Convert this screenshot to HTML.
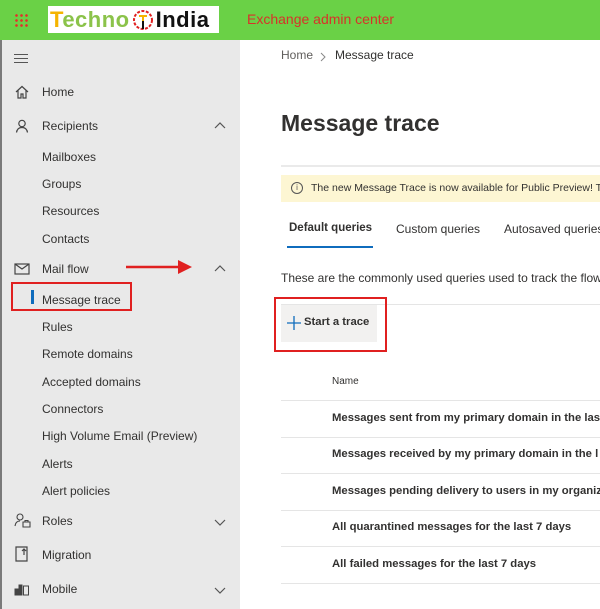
<!DOCTYPE html>
<html><head><style>
*{margin:0;padding:0;box-sizing:border-box}
body{width:600px;height:609px;overflow:hidden;font-family:"Segoe UI","Liberation Sans",sans-serif;background:#fff;position:relative;color:#323130;font-size:12px}
.hdr{position:absolute;left:0;top:0;width:600px;height:40px;background:#6ad146}
.logo{position:absolute;left:48px;top:6px;width:171px;height:27px;background:#fff;font-weight:bold;font-size:22px;line-height:27px;padding-left:2px;letter-spacing:0.5px}
.side{position:absolute;left:0;top:40px;width:240px;height:569px;background:#e9e9e9;border-left:2px solid #7a7a7a}
.t{position:absolute;font-size:12px;color:#323130;white-space:nowrap}
.ic{position:absolute}
.row{position:absolute;left:281px;width:319px;height:1px;background:#e5e5e5}
.b{font-weight:bold;color:#323130;font-size:11.3px}
</style></head><body>
<div class="hdr">
 <div style="position:absolute;left:14px;top:13px;width:14px;height:14px;background-image:radial-gradient(circle,#e0342a 1.2px,transparent 1.5px);background-size:5px 5px"></div>
 <div class="logo"><span style="color:#f5b400">T</span><span style="color:#8bc34a">echno</span><svg width="24" height="22" viewBox="0 0 24 22" style="vertical-align:-4px;margin:0 1px"><circle cx="12" cy="11" r="9" fill="none" stroke="#e02020" stroke-width="2" stroke-dasharray="3 1.5"/><path d="M8 7H16M12 7V20" stroke="#f5b400" stroke-width="2"/><path d="M12 12V20" stroke="#111" stroke-width="2"/></svg><span style="color:#111">India</span></div>
 <div class="t" style="left:247px;top:11px;font-size:14px;color:#d8322a">Exchange admin center</div>
</div>
<div class="side">
 <div class="ic" style="left:12px;top:14px;width:14px;height:9px;border-top:1.3px solid #555;border-bottom:1.3px solid #555"><div style="margin-top:3px;height:1.3px;background:#555"></div></div>
 <svg class="ic" style="left:13px;top:45px" width="14" height="14" viewBox="0 0 14 14" fill="none" stroke="#444" stroke-width="1.2"><path d="M1 7L7 1.5 13 7M3 5.5V13H6V9H8V13H11V5.5"/></svg>
 <div class="t" style="left:40px;top:45px">Home</div>
 <svg class="ic" style="left:13px;top:79px" width="14" height="14" viewBox="0 0 14 14" fill="none" stroke="#444" stroke-width="1.2"><circle cx="7" cy="4.5" r="3.2"/><path d="M1.5 13.5C2 10 4 8.5 7 8.5S12 10 12.5 13.5"/></svg>
 <div class="t" style="left:40px;top:79px">Recipients</div>
 <svg class="ic" style="left:212px;top:82px" width="12" height="7" viewBox="0 0 12 7" fill="none" stroke="#555" stroke-width="1.2"><path d="M1 6L6 1 11 6"/></svg>
 <div class="t" style="left:40px;top:110px">Mailboxes</div>
 <div class="t" style="left:40px;top:137px">Groups</div>
 <div class="t" style="left:40px;top:164px">Resources</div>
 <div class="t" style="left:40px;top:192px">Contacts</div>
 <svg class="ic" style="left:12px;top:223px" width="16" height="12" viewBox="0 0 16 12" fill="none" stroke="#444" stroke-width="1.2"><rect x="1" y="1" width="14" height="10"/><path d="M1 1L8 6 15 1"/></svg>
 <div class="t" style="left:40px;top:222px">Mail flow</div>
 <svg class="ic" style="left:212px;top:225px" width="12" height="7" viewBox="0 0 12 7" fill="none" stroke="#555" stroke-width="1.2"><path d="M1 6L6 1 11 6"/></svg>
 <div class="ic" style="left:9px;top:242px;width:121px;height:29px;border:2.5px solid #e02020"></div>
 <div class="ic" style="left:29px;top:250px;width:3px;height:14px;background:#0f6cbd"></div>
 <div class="t" style="left:40px;top:253px">Message trace</div>
 <div class="t" style="left:40px;top:280px">Rules</div>
 <div class="t" style="left:40px;top:307px">Remote domains</div>
 <div class="t" style="left:40px;top:335px">Accepted domains</div>
 <div class="t" style="left:40px;top:362px">Connectors</div>
 <div class="t" style="left:40px;top:389px">High Volume Email (Preview)</div>
 <div class="t" style="left:40px;top:417px">Alerts</div>
 <div class="t" style="left:40px;top:444px">Alert policies</div>
 <svg class="ic" style="left:12px;top:473px" width="17" height="15" viewBox="0 0 17 15" fill="none" stroke="#444" stroke-width="1.1"><circle cx="6" cy="4" r="3"/><path d="M1 13C1.5 9.5 3.5 8 6 8M9 9h7v5H9zM11 9V7.5h3V9"/></svg>
 <div class="t" style="left:40px;top:474px">Roles</div>
 <svg class="ic" style="left:212px;top:479px" width="12" height="7" viewBox="0 0 12 7" fill="none" stroke="#555" stroke-width="1.2"><path d="M1 1L6 6 11 1"/></svg>
 <svg class="ic" style="left:13px;top:506px" width="14" height="16" viewBox="0 0 14 16" fill="none" stroke="#444" stroke-width="1.2"><path d="M1 1H12V15H1zM9 3V9M7 5L9 3 11 5"/></svg>
 <div class="t" style="left:40px;top:508px">Migration</div>
 <svg class="ic" style="left:12px;top:541px" width="16" height="15" viewBox="0 0 16 15" fill="#444" stroke="#444" stroke-width="1"><rect x="1" y="8" width="3" height="6"/><rect x="5" y="4" width="3" height="10"/><rect x="9.5" y="5" width="5" height="9" fill="none"/></svg>
 <div class="t" style="left:40px;top:542px">Mobile</div>
 <svg class="ic" style="left:212px;top:547px" width="12" height="7" viewBox="0 0 12 7" fill="none" stroke="#555" stroke-width="1.2"><path d="M1 1L6 6 11 1"/></svg>
</div>
<svg style="position:absolute;left:126px;top:260px" width="66" height="14"><path d="M0 7H54" stroke="#e02020" stroke-width="2.5"/><path d="M52 0L66 7 52 14z" fill="#e02020"/></svg>
<div class="t" style="left:281px;top:48px;color:#605e5c">Home</div>
<svg class="ic" style="left:320px;top:52px" width="6" height="10" viewBox="0 0 6 10" fill="none" stroke="#888" stroke-width="1"><path d="M1 1L5 5 1 9"/></svg>
<div class="t" style="left:335px;top:48px">Message trace</div>
<div class="t" style="left:281px;top:110px;font-size:23px;font-weight:bold">Message trace</div>
<div class="row" style="top:165px;background:#eaeaea;height:2px"></div>
<div style="position:absolute;left:281px;top:175px;width:319px;height:27px;background:#fdf6d3"></div>
<div class="ic" style="left:291px;top:182px;width:12px;height:12px;border:1px solid #555;border-radius:50%;font-size:8px;line-height:10px;text-align:center;color:#555">i</div>
<div class="t" style="left:311px;top:182px;font-size:10.5px">The new Message Trace is now available for Public Preview! The</div>
<div class="t b" style="left:289px;top:222px;font-size:11.5px">Default queries</div>
<div class="ic" style="left:287px;top:246px;width:86px;height:2px;background:#0f6cbd"></div>
<div class="t" style="left:396px;top:222px">Custom queries</div>
<div class="t" style="left:504px;top:222px">Autosaved queries</div>
<div class="t" style="left:281px;top:271px">These are the commonly used queries used to track the flow</div>
<div class="row" style="top:304px"></div>
<div style="position:absolute;left:281px;top:305px;width:96px;height:37px;background:#f2f1f0"></div>
<div class="ic" style="left:274px;top:297px;width:113px;height:55px;border:2.5px solid #e02020"></div>
<svg class="ic" style="left:287px;top:316px" width="14" height="14" viewBox="0 0 14 14" stroke="#0f6cbd" stroke-width="1.3"><path d="M7 0V14M0 7H14"/></svg>
<div class="t b" style="left:304px;top:316px">Start a trace</div>
<div class="t" style="left:332px;top:376px;font-size:10px">Name</div>
<div class="row" style="top:400px"></div>
<div class="t b" style="left:332px;top:412px">Messages sent from my primary domain in the las</div>
<div class="row" style="top:437px"></div>
<div class="t b" style="left:332px;top:448px">Messages received by my primary domain in the l</div>
<div class="row" style="top:473px"></div>
<div class="t b" style="left:332px;top:485px">Messages pending delivery to users in my organiz</div>
<div class="row" style="top:510px"></div>
<div class="t b" style="left:332px;top:521px">All quarantined messages for the last 7 days</div>
<div class="row" style="top:546px"></div>
<div class="t b" style="left:332px;top:558px">All failed messages for the last 7 days</div>
<div class="row" style="top:583px"></div>
</body></html>
